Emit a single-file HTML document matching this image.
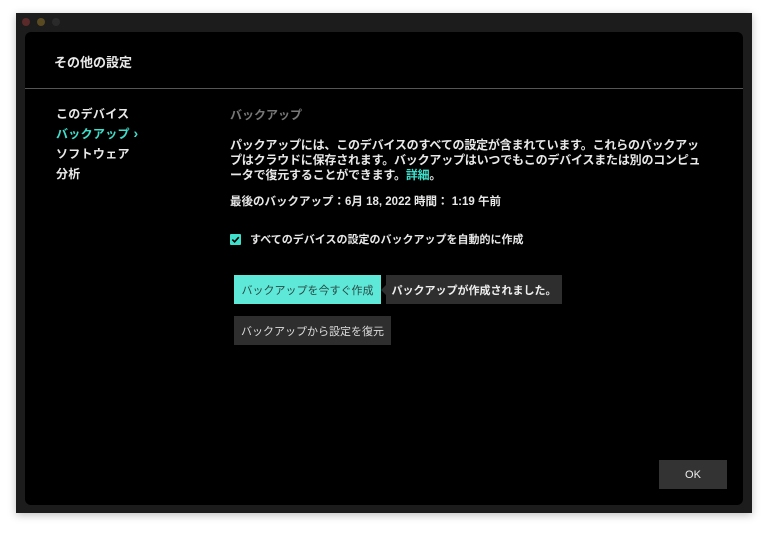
<!DOCTYPE html>
<html><head><meta charset="utf-8"><style>
*{margin:0;padding:0;box-sizing:border-box}
body{width:768px;height:533px;background:#fff;position:relative;overflow:hidden;font-family:"Liberation Sans","Noto Sans CJK JP",sans-serif;color:#e8e8e8}
.win{position:absolute;left:16px;top:13px;width:736px;height:500px;background:#1c1c1c;box-shadow:0 2px 8px rgba(0,0,0,.25)}
.dot{position:absolute;top:5px;width:8px;height:8px;border-radius:50%}
.dlg{position:absolute;left:25px;top:32px;width:718px;height:473px;background:#000;border-radius:6px}
.a{position:absolute;white-space:nowrap}
.hr{position:absolute;left:25px;top:88px;width:718px;height:1px;background:#555}
.s{font-size:12px;font-weight:bold;letter-spacing:.3px}
.p{font-size:12px;font-weight:bold;line-height:15px;letter-spacing:-.2px}
.btn{position:absolute;font-size:11px;display:flex;align-items:center;justify-content:center}
</style></head><body>
<div class="win">
<div class="dot" style="left:6px;background:#5a2a2a"></div>
<div class="dot" style="left:21px;background:#5a4a22"></div>
<div class="dot" style="left:36px;background:#2a2a2a"></div>
</div>
<div class="dlg"></div>
<div class="a" style="left:54px;top:52px;font-size:13px;font-weight:bold">その他の設定</div>
<div class="hr"></div>
<div class="a s" style="left:56px;top:105px">このデバイス</div>
<div class="a s" style="left:56px;top:125px;color:#3ee0cc">バックアップ <span style="font-size:14px">›</span></div>
<div class="a s" style="left:56px;top:145px">ソフトウェア</div>
<div class="a s" style="left:56px;top:165px">分析</div>
<div class="a" style="left:230px;top:106px;font-size:12px;color:#777;font-weight:bold">バックアップ</div>
<div class="a p" style="left:230px;top:138px">パックアップには、このデバイスのすべての設定が含まれています。これらのパックアッ<br>プはクラウドに保存されます。バックアップはいつでもこのデバイスまたは別のコンピュ<br>ータで復元することができます。<span style="color:#3ee0cc">詳細</span>。</div>
<div class="a p" style="left:230px;top:195px;font-size:11.5px;letter-spacing:0">最後のバックアップ：6月 18, 2022 時間： 1:19 午前</div>
<div class="a" style="left:230px;top:234px;width:11px;height:11px;background:#3ee0cc;border-radius:1px"><svg width="11" height="11" viewBox="0 0 11 11" style="display:block"><path d="M2.3 5.6 L4.6 7.8 L8.8 3.2" stroke="#000" stroke-width="1.6" fill="none"/></svg></div>
<div class="a p" style="left:250px;top:233px;font-size:11px;letter-spacing:0">すべてのデバイスの設定のバックアップを自動的に作成</div>
<div class="btn" style="left:234px;top:275px;width:147px;height:29px;background:#5ee8d8;color:#2a4a46">バックアップを今すぐ作成</div>
<div class="a" style="left:381px;top:285px;width:0;height:0;border-top:5px solid transparent;border-bottom:5px solid transparent;border-right:5px solid #2e2e2e"></div>
<div class="btn" style="left:386px;top:275px;width:176px;height:29px;background:#2e2e2e;color:#eee;font-weight:bold">パックアップが作成されました。</div>
<div class="btn" style="left:234px;top:316px;width:157px;height:29px;background:#2e2e2e;color:#ddd">バックアップから設定を復元</div>
<div class="btn" style="left:659px;top:460px;width:68px;height:29px;background:#333;color:#eee;font-size:11px">OK</div>
</body></html>
